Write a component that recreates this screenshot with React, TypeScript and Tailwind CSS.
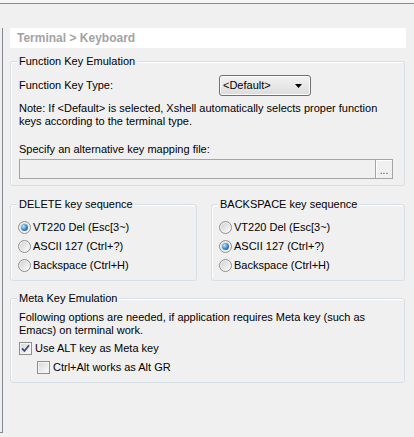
import React from "react";

const font = { fontFamily: '"Liberation Sans", Arial, sans-serif' };

function Radio({ checked }: { checked?: boolean }) {
  return (
    <span className="w-[13px] h-[13px] rounded-full border border-[#8e8f8f] bg-gradient-to-br from-[#cfcfcf] to-[#fdfdfd] flex items-center justify-center shrink-0 shadow-[inset_0_0_0_1px_#f4f4f4]">
      {checked && (
        <span className="w-[7px] h-[7px] rounded-full bg-[radial-gradient(circle_at_35%_35%,#bfe6fb,#3583c4_55%,#1b4f82)]" />
      )}
    </span>
  );
}

function Checkbox({ checked }: { checked?: boolean }) {
  return (
    <span className="w-[13px] h-[13px] border border-[#8e8f8f] bg-gradient-to-br from-[#d8d8d8] to-[#fbfbfb] flex items-center justify-center shrink-0 shadow-[inset_0_0_0_1px_#f4f4f4]">
      {checked && (
        <svg width="9" height="9" viewBox="0 0 9 9">
          <path d="M1 4.5 L3.5 7 L8 1.2" fill="none" stroke="#3b4f82" strokeWidth="1.8" />
        </svg>
      )}
    </span>
  );
}

function Group({
  title,
  className,
  children,
}: {
  title: string;
  className?: string;
  children: React.ReactNode;
}) {
  return (
    <div
      className={`relative border border-[#d5dfe5] rounded-[3px] shadow-[inset_1px_1px_0_#ffffff] ${className ?? ""}`}
    >
      <span className="absolute left-[6px] top-[-7px] px-[2px] bg-[#f0f0f0] leading-[13px]">
        {title}
      </span>
      {children}
    </div>
  );
}

function RadioRow({ checked, label }: { checked?: boolean; label: string }) {
  return (
    <div className="h-[19px] flex items-center gap-[2px]">
      <Radio checked={checked} />
      <span>{label}</span>
    </div>
  );
}

export default function App() {
  return (
    <div
      className="w-[414px] h-[437px] bg-[#f0f0f0] overflow-hidden text-[11px] leading-[13px] text-black"
      style={font}
    >
      <div className="h-[3px] bg-[#f5f5f5]" />
      <div className="h-px bg-[#8a8a8a]" />
      <div className="flex">
        <div className="w-[3px] h-[405px] mt-[24px] border-r border-b border-[#828790] shrink-0" />
        <div className="ml-[7px] w-[396px] flex flex-col">
          <div className="mt-[24px] h-[20px] bg-white flex items-center pl-[7px] text-[12px] font-bold text-[#a3a3a3]">
            Terminal &gt; Keyboard
          </div>

          <Group title="Function Key Emulation" className="mt-[13px] w-[395px] pt-[13px] pb-[6px] pl-[8px]">
            <div className="h-[21px] flex items-center">
              <span className="w-[200px]">Function Key Type:</span>
              <div className="w-[92px] h-[21px] border border-[#707070] rounded-[3px] bg-gradient-to-b from-[#f3f3f3] to-[#dcdcdc] shadow-[inset_0_0_0_1px_#fbfbfb] flex items-center pl-[3px] pr-[8px]">
                <span className="flex-1">&lt;Default&gt;</span>
                <svg width="7" height="4" viewBox="0 0 7 4">
                  <path d="M0 0 H7 L3.5 4 Z" fill="#000" />
                </svg>
              </div>
            </div>
            <p className="mt-[6px] whitespace-nowrap">
              Note: If &lt;Default&gt; is selected, Xshell automatically selects proper function
              <br />
              keys according to the terminal type.
            </p>
            <p className="mt-[15px]">Specify an alternative key mapping file:</p>
            <div className="mt-[3px] w-[374px] h-[20px] border border-[#a5a5a5] bg-[#f0f0f0] flex justify-end">
              <div className="w-[17px] h-full border-l border-[#a5a5a5] bg-[#f0f0f0] shadow-[inset_1px_1px_0_#ffffff] flex items-end justify-center pb-[2px] text-[10px] leading-[10px] text-[#3a3a6a]">
                ...
              </div>
            </div>
          </Group>

          <div className="mt-[18px] flex gap-[14px]">
            <Group title="DELETE key sequence" className="w-[187px] pt-[13px] pb-[5px] pl-[7px]">
              <RadioRow checked label="VT220 Del (Esc[3~)" />
              <RadioRow label="ASCII 127 (Ctrl+?)" />
              <RadioRow label="Backspace (Ctrl+H)" />
            </Group>
            <Group title="BACKSPACE key sequence" className="w-[194px] pt-[13px] pb-[5px] pl-[7px]">
              <RadioRow label="VT220 Del (Esc[3~)" />
              <RadioRow checked label="ASCII 127 (Ctrl+?)" />
              <RadioRow label="Backspace (Ctrl+H)" />
            </Group>
          </div>

          <Group title="Meta Key Emulation" className="mt-[17px] w-[395px] pt-[12px] pb-[6px] pl-[8px]">
            <p className="whitespace-nowrap">
              Following options are needed, if application requires Meta key (such as
              <br />
              Emacs) on terminal work.
            </p>
            <div className="mt-[3px] h-[17px] flex items-center gap-[3px]">
              <Checkbox checked />
              <span>Use ALT key as Meta key</span>
            </div>
            <div className="mt-[2px] h-[17px] flex items-center gap-[3px] pl-[18px]">
              <Checkbox />
              <span>Ctrl+Alt works as Alt GR</span>
            </div>
          </Group>
        </div>
      </div>
    </div>
  );
}
